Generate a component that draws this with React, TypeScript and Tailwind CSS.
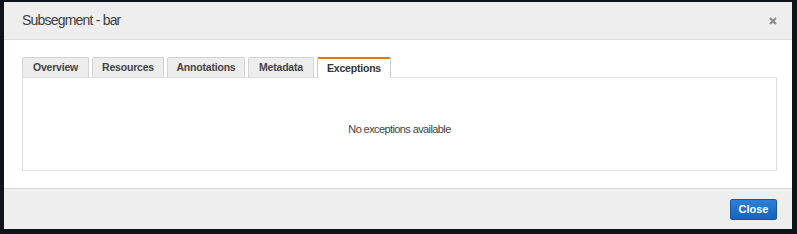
import React, { useState } from 'react';

const tabs = [
    { label: "Overview", width: "w-[67px]" },
    { label: "Resources", width: "w-[72px]" },
    { label: "Annotations", width: "w-[78px]" },
    { label: "Metadata", width: "w-[66px]" },
    { label: "Exceptions", width: "w-[74px]" },
];

function Tab({ label, width, active, onClick }: { label: string; width: string; active: boolean; onClick: () => void }) {
    if (active) {
        return (
            <button
                onClick={onClick}
                className={`${width} h-[21px] -mb-px bg-white border-x border-[#cccccc] border-t-2 border-t-[#e07b0f] text-[10.5px] tracking-[-0.2px] font-bold text-[#333333] leading-none rounded-t-[2px] relative z-10`}
            >
                {label}
            </button>
        );
    }
    return (
        <button
            onClick={onClick}
            className={`${width} h-[20px] bg-[#ededed] border-x border-t border-[#d3d3d3] text-[10.5px] tracking-[-0.2px] font-bold text-[#444444] leading-none rounded-t-[2px]`}
        >
            {label}
        </button>
    );
}

export default function App() {
    const [activeTab, setActiveTab] = useState<string>("Exceptions");

    return (
        <div className="w-[797px] h-[234px] bg-[#10141a] pt-[2px] pl-[4px] pr-[5px] pb-[5px] font-['Liberation_Sans',Arial,sans-serif]">
            <div className="flex flex-col h-full bg-white">
                <div className="flex items-center justify-between h-[38px] pl-[18px] pr-[15px] bg-[#eeeeee] border-b border-[#dcdcdc]">
                    <h1 className="text-[14px] text-[#3d3d3d] tracking-[-0.8px]">Subsegment - bar</h1>
                    <button className="text-[#8a8a8a]" aria-label="close">
                        <svg width="8" height="8" viewBox="0 0 8 8">
                            <path d="M1 1L7 7M7 1L1 7" stroke="currentColor" strokeWidth="2.2" />
                        </svg>
                    </button>
                </div>
                <div className="flex-1 flex flex-col pt-[17px] pl-[18px] pr-[15px] pb-[17px]">
                    <div className="flex items-end gap-[3px]">
                        {tabs.map((t) => (
                            <Tab key={t.label} label={t.label} width={t.width} active={t.label === activeTab} onClick={() => setActiveTab(t.label)} />
                        ))}
                    </div>
                    <div className="flex-1 border border-[#dddddd] flex justify-center pt-[46px]">
                        <p className="text-[11px] text-[#444444] tracking-[-0.6px] leading-none">
                            {activeTab === "Exceptions" ? "No exceptions available" : ""}
                        </p>
                    </div>
                </div>
                <div className="flex justify-end items-center h-[41px] pr-[15px] bg-[#eeeeee] border-t border-[#dcdcdc]">
                    <button className="w-[47px] h-[21px] rounded-[2px] border border-[#1558a8] bg-gradient-to-b from-[#2b80d6] to-[#1664c0] text-white text-[11px] font-bold">
                        Close
                    </button>
                </div>
            </div>
        </div>
    );
}
